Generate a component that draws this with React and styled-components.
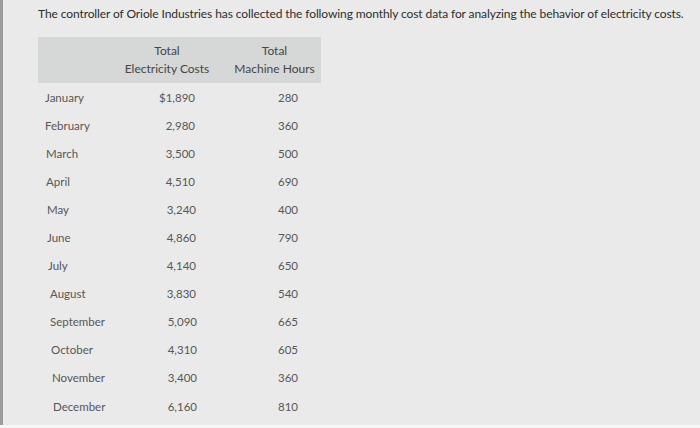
import React from "react";
import styled, { createGlobalStyle } from "styled-components";

const Global = createGlobalStyle`
  html, body { margin: 0; padding: 0; background: #f6f6f5; }
  body { font-family: Lato, "Open Sans", sans-serif; }
`;

const Page = styled.div`
  width: 700px;
  height: 425px;
  box-sizing: border-box;
  background: #e9eae9;
  border-left: 3px solid #9c9c9c;
  padding: 6px 0 0 35px;
  overflow: hidden;
`;

const Title = styled.p`
  margin: 0;
  font-size: 12px;
  line-height: 15px;
  color: #2e2e2e;
  letter-spacing: -0.1px;
  white-space: nowrap;
`;

const Table = styled.div`
  margin-top: 16px;
  width: 283px;
  display: grid;
  grid-template-columns: 80px 98px 105px;
`;

const HeadCell = styled.div`
  background: #d6d7d7;
  height: 46px;
  display: flex;
  flex-direction: column;
  justify-content: center;
  align-items: center;
  font-size: 12px;
  line-height: 18px;
  color: #454545;
  padding-left: ${(p) => p.$shift || 0}px;
  box-sizing: border-box;
`;

const Cell = styled.div`
  height: 28.1px;
  display: flex;
  align-items: center;
  font-size: 11.5px;
  color: #585858;
  justify-content: ${(p) => (p.$right ? "flex-end" : "flex-start")};
  padding: 0 ${(p) => p.$pr || 0}px 0 ${(p) => p.$pl || 0}px;
  box-sizing: border-box;
`;

const rows = [
  ["January", "$1,890", "280", 7],
  ["February", "2,980", "360", 7],
  ["March", "3,500", "500", 8],
  ["April", "4,510", "690", 8],
  ["May", "3,240", "400", 9],
  ["June", "4,860", "790", 9],
  ["July", "4,140", "650", 10],
  ["August", "3,830", "540", 12],
  ["September", "5,090", "665", 12],
  ["October", "4,310", "605", 13],
  ["November", "3,400", "360", 14],
  ["December", "6,160", "810", 15],
];

export default function App() {
  return (
    <>
      <Global />
      <Page>
        <Title>
          The controller of Oriole Industries has collected the following monthly cost data for analyzing the behavior of electricity costs.
        </Title>
        <Table>
          <HeadCell />
          <HeadCell>
            <span>Total</span>
            <span>Electricity Costs</span>
          </HeadCell>
          <HeadCell $shift={12}>
            <span>Total</span>
            <span>Machine Hours</span>
          </HeadCell>
          {rows.map(([m, c, h, pl], i) => (
            <React.Fragment key={m}>
              <Cell $pl={pl}>{m}</Cell>
              <Cell $right $pr={21 - Math.floor(i / 4)}>{c}</Cell>
              <Cell $right $pr={23}>{h}</Cell>
            </React.Fragment>
          ))}
        </Table>
      </Page>
    </>
  );
}
